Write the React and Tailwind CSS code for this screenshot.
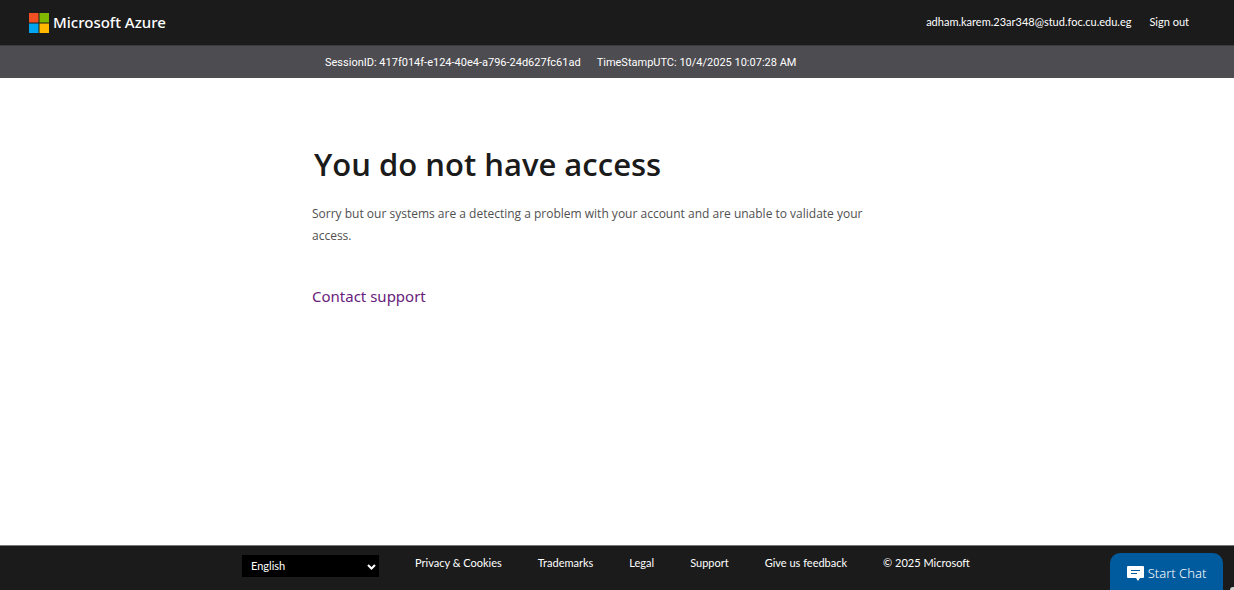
import React from "react";

const footerLinks = ["Privacy & Cookies", "Trademarks", "Legal", "Support", "Give us feedback"];

function MicrosoftLogo() {
    return (
        <svg className="size-5 shrink-0" viewBox="0 0 20 20" aria-hidden="true">
            <path fill="#f25022" d="M0 0h9.5v9.5H0z" />
            <path fill="#7fba00" d="M10.5 0H20v9.5h-9.5z" />
            <path fill="#00a4ef" d="M0 10.5h9.5V20H0z" />
            <path fill="#ffb900" d="M10.5 10.5H20V20h-9.5z" />
        </svg>
    );
}

function Header() {
    return (
        <header className="flex h-[45px] items-center justify-between bg-[#1b1b1b] pl-[29px] pr-[45px] text-white">
            <a href="#home" className="flex items-center gap-1 font-['Noto_Sans',sans-serif] text-[15px] font-medium">
                <MicrosoftLogo />
                Microsoft Azure
            </a>
            <div className="flex items-center gap-[18px] font-['Lato',sans-serif] text-[11px]">
                <span>adham.karem.23ar348@stud.foc.cu.edu.eg</span>
                <a href="#signout">Sign out</a>
            </div>
        </header>
    );
}

function SessionBar() {
    return (
        <div className="border-t border-[#3b3b3d] bg-[#4d4c51] font-['Roboto',sans-serif] text-[11px] text-white">
            <div className="mx-auto flex h-8 max-w-[610px] items-center gap-4 pl-[13px] pt-0.5">
                <span>SessionID: 417f014f-e124-40e4-a796-24d627fc61ad</span>
                <span>TimeStampUTC: 10/4/2025 10:07:28 AM</span>
            </div>
        </div>
    );
}

function Footer() {
    return (
        <footer className="h-[45px] border-t border-[#777] bg-[#1b1b1b] font-['Lato',sans-serif] text-[11px] text-white">
            <div className="mx-auto flex max-w-[750px] items-start pt-[9px]">
                <div className="relative mr-9 w-[137px] shrink-0">
                    <select
                        aria-label="Language"
                        className="h-[22px] w-full appearance-none bg-black pl-[9px] text-[11px] text-white"
                    >
                        <option>English</option>
                    </select>
                    <svg className="pointer-events-none absolute right-[3px] top-2 h-2 w-[9px]" viewBox="0 0 9 8" aria-hidden="true">
                        <path d="M1 2l3.5 3.5L8 2" fill="none" stroke="#fff" strokeWidth="2" />
                    </svg>
                </div>
                <nav className="flex gap-9 whitespace-nowrap">
                    {footerLinks.map((label) => (
                        <a key={label} href="#footer" className="leading-4">{label}</a>
                    ))}
                    <span className="leading-4">© 2025 Microsoft</span>
                </nav>
            </div>
        </footer>
    );
}

export default function App() {
    return (
        <div className="flex min-h-screen flex-col bg-white font-['Open_Sans','Noto_Sans',sans-serif]">
            <Header />
            <SessionBar />
            <main className="mx-auto w-full max-w-[610px] grow pt-16">
                <h1 className="pl-0.5 text-[31px] font-semibold leading-[44px] text-[#1b1b1b]">You do not have access</h1>
                <p className="mt-[17px] max-w-[570px] text-xs leading-[22px] text-[#505050]">
                    Sorry but our systems are a detecting a problem with your account and are unable to validate your access.
                </p>
                <a href="#support" className="mt-[38px] inline-block font-['Noto_Sans',sans-serif] text-[15px] text-[#68217a]">
                    Contact support
                </a>
            </main>
            <Footer />
            <button
                type="button"
                className="fixed bottom-0 right-[11px] flex h-[37px] w-[113px] items-center justify-center gap-1 rounded-t-[10px] bg-[#005a9e] pt-1 font-['Noto_Sans',sans-serif] text-[13px] font-light text-white"
            >
                <svg className="h-[15px] w-[17px]" viewBox="0 0 17 15" aria-hidden="true">
                    <path d="M1 0h15a1 1 0 0 1 1 1v10a1 1 0 0 1-1 1h-3l-2 3-2-3H1a1 1 0 0 1-1-1V1a1 1 0 0 1 1-1z" fill="#fff" />
                    <path d="M4 4.500h9M4 7.500h6" stroke="#005a9e" strokeWidth="1.200" />
                </svg>
                Start Chat
            </button>
            <span className="fixed bottom-0 right-0 h-[3px] w-1 rounded-tl-sm bg-[#d0d0d0]" />
        </div>
    );
}
